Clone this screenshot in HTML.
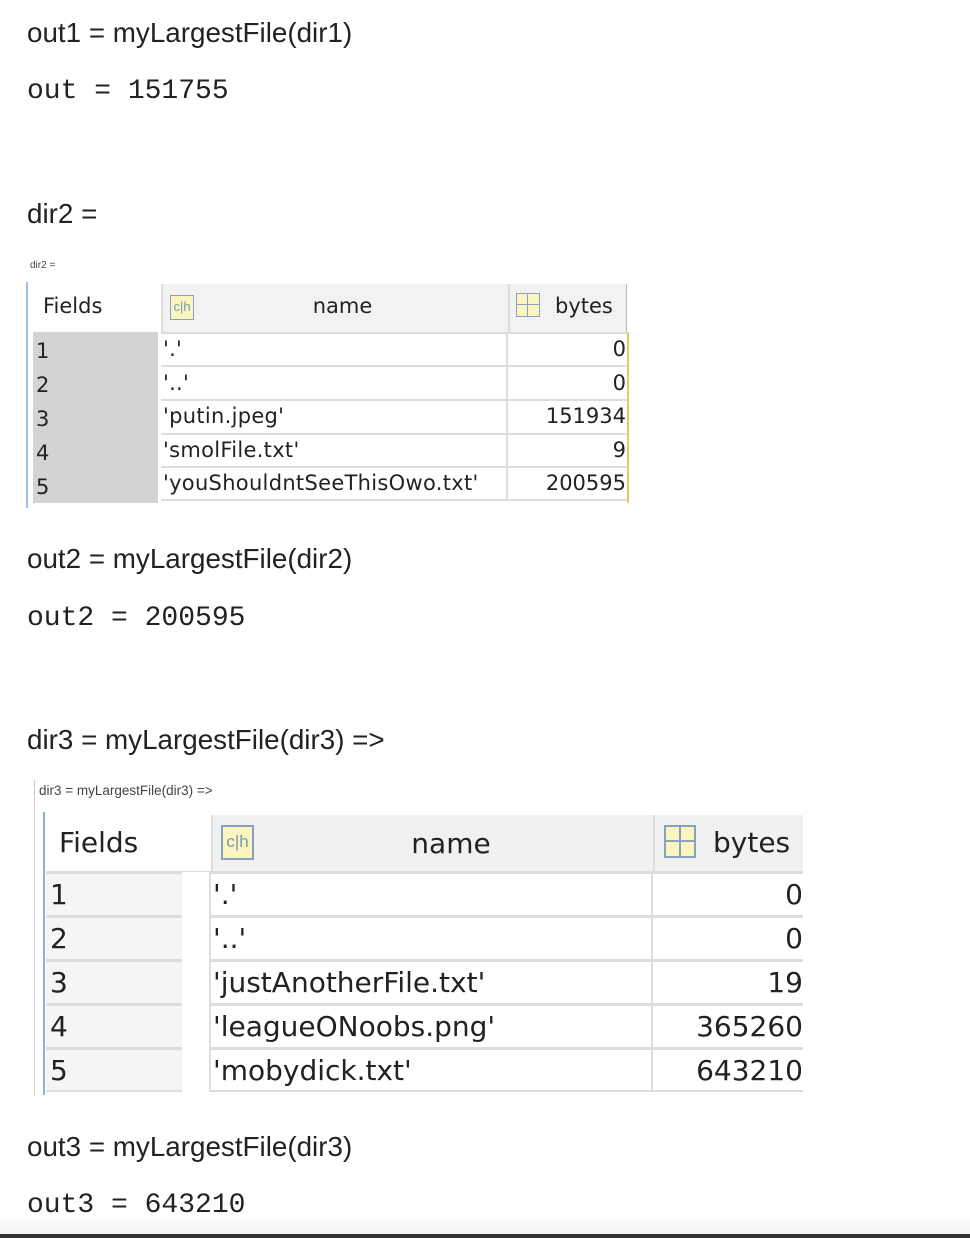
<!DOCTYPE html>
<html><head><meta charset="utf-8"><style>
body{margin:0;width:970px;height:1238px;background:#fff;position:relative;overflow:hidden;font-family:"Liberation Sans",sans-serif;color:#222}
.a{position:absolute;white-space:nowrap}
.s{font-size:27.8px}
.m{font-family:"Liberation Mono",monospace;font-size:28px;color:#222}
.c{position:absolute;box-sizing:border-box;font-family:"DejaVu Sans",sans-serif;color:#222;white-space:nowrap;overflow:hidden}
.ic{display:inline-block;border:1px solid #8aa0bf;background:#fbf6c0;vertical-align:middle}
</style></head><body>
<div class="a s" style="left:27px;top:17px">out1 = myLargestFile(dir1)</div>
<div class="a m" style="left:27px;top:76px">out = 151755</div>
<div class="a s" style="left:27px;top:198px">dir2 =</div>
<div class="a" style="left:30px;top:260px;font-size:10px;color:#444">dir2 =</div>

<!-- table 1 -->
<div class="a" style="left:26px;top:282px;width:2px;height:226px;background:#9fc0e6"></div>
<div class="c" style="left:33px;top:284px;width:128px;height:48px;background:#fff;font-size:21px;padding:10px 0 0 10px">Fields</div>
<div class="c" style="left:161px;top:284px;width:347px;height:48px;background:#f2f2f2;border-left:2px solid #ddd;font-size:21px;text-align:center;padding:10px 0 0 14px">name</div>
<div class="a" style="left:170px;top:295px;width:24px;height:25px;background:#fbf6c0;border:1px solid #8aa0bf;box-sizing:border-box;font-size:13px;color:#79a;line-height:22px;text-align:center">c|h</div>
<div class="c" style="left:508px;top:284px;width:119px;height:48px;background:#f2f2f2;border-left:2px solid #ddd;border-right:1px solid #bbb;font-size:21px;padding:10px 0 0 45px">bytes</div>
<div class="a" style="left:516px;top:293px;width:24px;height:24px;background:#fbf6c0;border:1px solid #8aa0bf;box-sizing:border-box"><div style="position:absolute;left:10px;top:0;width:1px;height:22px;background:#8aa0bf"></div><div style="position:absolute;left:0;top:10px;width:22px;height:1px;background:#8aa0bf"></div></div>
<div class="a" style="left:33px;top:332px;width:125px;height:171px;background:#d3d3d3"></div>
<div class="a" style="left:161px;top:332px;width:466px;height:169px;border-top:2px solid #ddd;border-right:2px solid #e8c860"></div>
<div class="a" style="left:506px;top:332px;width:2px;height:169px;background:#ddd"></div>
<div class="a" style="left:161px;top:365px;width:466px;height:2px;background:#ddd"></div>
<div class="a" style="left:161px;top:399px;width:466px;height:2px;background:#ddd"></div>
<div class="a" style="left:161px;top:433px;width:466px;height:2px;background:#ddd"></div>
<div class="a" style="left:161px;top:466px;width:466px;height:2px;background:#ddd"></div>
<div class="a" style="left:161px;top:499px;width:466px;height:2px;background:#ddd"></div>
<div class="c" style="left:36px;top:334px;font-size:21px;line-height:34px">1<br>2<br>3<br>4<br>5</div>
<div class="c" style="left:163px;top:333px;font-size:21px;line-height:33.5px;letter-spacing:0.3px">'.'<br>'..'<br>'putin.jpeg'<br>'smolFile.txt'<br>'youShouldntSeeThisOwo.txt'</div>
<div class="c" style="left:508px;top:333px;width:118px;text-align:right;font-size:21px;line-height:33.5px">0<br>0<br>151934<br>9<br>200595</div>

<div class="a s" style="left:27px;top:543px">out2 = myLargestFile(dir2)</div>
<div class="a m" style="left:27px;top:603px">out2 = 200595</div>
<div class="a s" style="left:27px;top:724px">dir3 = myLargestFile(dir3) =&gt;</div>
<div class="a" style="left:39px;top:783px;font-size:13.5px;color:#444">dir3 = myLargestFile(dir3) =&gt;</div>

<!-- table 2 -->
<div class="a" style="left:34px;top:780px;width:1px;height:316px;background:#ccc"></div>
<div class="a" style="left:43px;top:812px;width:2px;height:283px;background:#8ab3e0"></div>
<div class="c" style="left:46px;top:815px;width:165px;height:57px;background:#fff;font-size:28px;padding:11px 0 0 13px">Fields</div>
<div class="c" style="left:211px;top:815px;width:442px;height:57px;background:#f1f1f1;border-left:2px solid #ddd;font-size:28px;text-align:center;padding:12px 0 0 36px">name</div>
<div class="a" style="left:221px;top:825px;width:33px;height:35px;background:#fbf6c0;border:2px solid #8aa0bf;box-sizing:border-box;font-size:17px;color:#79a;line-height:30px;text-align:center">c|h</div>
<div class="c" style="left:653px;top:815px;width:150px;height:57px;background:#f1f1f1;border-left:2px solid #ddd;font-size:28px;padding:11px 0 0 58px">bytes</div>
<div class="a" style="left:664px;top:825px;width:32px;height:33px;background:#fbf6c0;border:2px solid #8aa0bf;box-sizing:border-box"><div style="position:absolute;left:13px;top:0;width:2px;height:29px;background:#8aa0bf"></div><div style="position:absolute;left:0;top:13px;width:28px;height:2px;background:#8aa0bf"></div></div>
<div class="a" style="left:46px;top:872px;width:136px;height:220px;background:#f5f5f5"></div>
<div class="a" style="left:46px;top:871px;width:757px;height:3px;background:#ddd"></div>
<div class="a" style="left:46px;top:915px;width:757px;height:3px;background:#ddd"></div>
<div class="a" style="left:46px;top:959px;width:757px;height:3px;background:#ddd"></div>
<div class="a" style="left:46px;top:1003px;width:757px;height:3px;background:#ddd"></div>
<div class="a" style="left:46px;top:1047px;width:757px;height:3px;background:#ddd"></div>
<div class="a" style="left:46px;top:1090px;width:757px;height:2px;background:#ddd"></div>
<div class="a" style="left:182px;top:872px;width:29px;height:220px;background:#fff"></div>
<div class="a" style="left:209px;top:872px;width:2px;height:220px;background:#ddd"></div>
<div class="a" style="left:651px;top:872px;width:2px;height:220px;background:#ddd"></div>
<div class="c" style="left:50px;top:873px;font-size:28px;line-height:44px">1<br>2<br>3<br>4<br>5</div>
<div class="c" style="left:213px;top:873px;font-size:28px;line-height:44px">'.'<br>'..'<br>'justAnotherFile.txt'<br>'leagueONoobs.png'<br>'mobydick.txt'</div>
<div class="c" style="left:653px;top:873px;width:150px;text-align:right;font-size:28px;line-height:44px">0<br>0<br>19<br>365260<br>643210</div>

<div class="a s" style="left:27px;top:1131px">out3 = myLargestFile(dir3)</div>
<div class="a m" style="left:27px;top:1190px">out3 = 643210</div>
<div class="a" style="left:0;top:1214px;width:970px;height:20px;background:linear-gradient(#fff,#f3f3f3)"></div>
<div class="a" style="left:0;top:1234px;width:970px;height:4px;background:#333"></div>
</body></html>
